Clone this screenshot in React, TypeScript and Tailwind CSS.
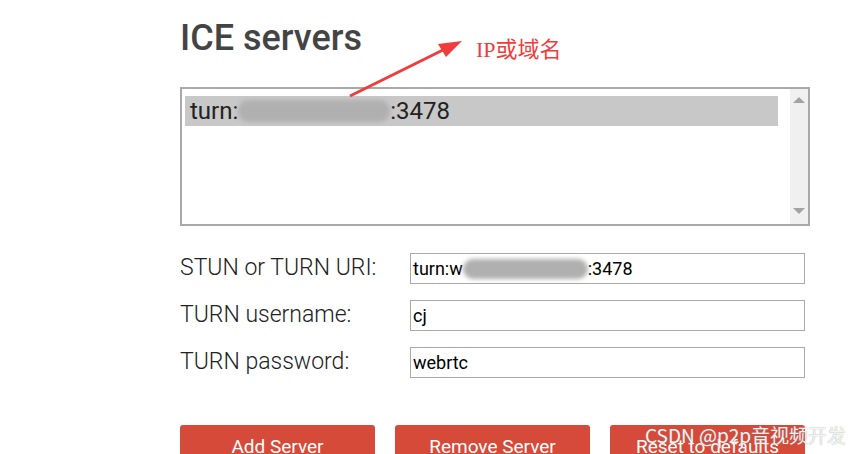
import React from 'react';

const fields = [
  { label: 'STUN or TURN URI:', value: 'turn:w', blur: true },
  { label: 'TURN username:', value: 'cj', blur: false },
  { label: 'TURN password:', value: 'webrtc', blur: false },
];

function Blur({ w, h }: { w: number; h: number }) {
  return (
    <span className="inline-block align-middle rounded-full bg-[#b0b0b0] blur-[2px]" style={{ width: w, height: h }} />
  );
}

export default function App() {
  return (
    <div className="relative w-[866px] h-[454px] overflow-hidden bg-white font-['Roboto',sans-serif]">
      <div className="pl-[180px] pt-[14px] w-[810px]">
        <h2 className="text-[36px] leading-[48px] font-medium text-[#444]">ICE servers</h2>

        {/* server list */}
        <div className="mt-[25px] h-[139px] border-2 border-[#a9a9a9] flex">
          <div className="flex-1 pt-[7px] pl-[3px] pr-[12px]">
            <div className="h-[30px] bg-[#c8c8c8] flex items-center pl-[5px] text-[24px] text-[#222]">
              turn:<Blur w={152} h={22} />:3478
            </div>
          </div>
          <div className="w-[18px] bg-[#f0f0f0] flex flex-col justify-between items-center pt-[8px] pb-[10px]">
            <div className="w-0 h-0 border-x-[6px] border-x-transparent border-b-[6px] border-b-[#a3a3a3]" />
            <div className="w-0 h-0 border-x-[6px] border-x-transparent border-t-[6px] border-t-[#a3a3a3]" />
          </div>
        </div>

        {/* fields */}
        <div className="mt-[27px] flex flex-col gap-[16px] pr-[5px]">
          {fields.map((f) => (
            <div key={f.label} className="flex items-center h-[31px]">
              <div className="w-[230px] text-[23px] font-light text-[#222]">{f.label}</div>
              <div className="flex-1 h-[31px] border border-[#a9a9a9] flex items-center pl-[2px] text-[18px] text-black">
                {f.value}
                {f.blur && (
                  <>
                    <Blur w={125} h={20} />:3478
                  </>
                )}
              </div>
            </div>
          ))}
        </div>

        {/* buttons */}
        <div className="mt-[47px] flex gap-[20px] pr-[5px]">
          {['Add Server', 'Remove Server', 'Reset to defaults'].map((b) => (
            <button key={b} className="w-[195px] h-[40px] bg-[#d64a39] rounded-[3px] text-white text-[19px] leading-[24px] pt-[10px] self-start flex justify-center">
              {b}
            </button>
          ))}
        </div>
      </div>

      {/* annotation */}
      <svg className="absolute left-0 top-0" width="866" height="454">
        <line x1="350" y1="96" x2="445" y2="49" stroke="#f03c3c" strokeWidth="3" />
        <polygon points="462,41 438,44 446,57" fill="#f03c3c" />
      </svg>
      <div className="absolute left-[476px] top-[33px] text-[22px] text-[#f03c3c] font-['Liberation_Serif','Noto_Sans_CJK_SC',serif]">
        IP或域名
      </div>

      {/* watermark */}
      <div className="absolute left-[645px] top-[421px] text-[19px] text-white/90 font-['Noto_Sans_CJK_SC',sans-serif] [text-shadow:0_0_1px_#888]">
        CSDN @p2p音视频开发
      </div>
    </div>
  );
}
